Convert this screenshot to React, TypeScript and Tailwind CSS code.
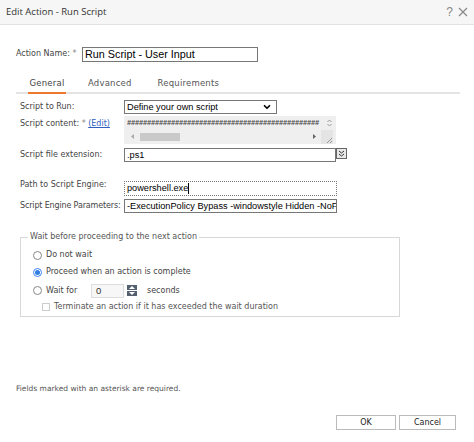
import { ChevronDown } from 'lucide-react';

const label = "text-[8px] text-[#444] font-['DejaVu_Sans',sans-serif] whitespace-nowrap";
const field = "h-[14px] border border-[#777] bg-white px-[2px] text-[9.2px] leading-[12px] text-black font-['Liberation_Sans',Arial,sans-serif] flex items-center overflow-hidden whitespace-nowrap";

function Radio({ checked }: { checked?: boolean }) {
  return (
    <span className={`w-[9px] h-[9px] rounded-full border ${checked ? 'border-[#3b82f6] bg-white' : 'border-[#888] bg-white'} flex items-center justify-center`}>
      {checked && <span className="w-[5px] h-[5px] rounded-full bg-[#2f7de1]" />}
    </span>
  );
}

export default function App() {
  return (
    <div className="w-[474px] h-[442px] bg-white flex flex-col font-['DejaVu_Sans',sans-serif] overflow-hidden">
      {/* Title bar */}
      <div className="h-[25px] bg-[#f6f6f6] border-b border-[#e2e2e2] flex items-center justify-between pl-[6px] pr-[6px]">
        <span className="text-[9.5px] text-[#333] font-['Open_Sans',sans-serif]">Edit Action - Run Script</span>
        <span className="flex items-center gap-[5px] text-[#888]">
          <span className="text-[12px] font-['Liberation_Sans',sans-serif]">?</span>
          <svg width="10" height="10" viewBox="0 0 10 10"><path d="M1 1L9 9M9 1L1 9" stroke="#888" strokeWidth="1.2" /></svg>
        </span>
      </div>

      <div className="flex flex-col pl-[16px] pr-[14px]">
        {/* Action name */}
        <div className="flex items-center mt-[21px] h-[16px]">
          <span className={`${label} w-[66px]`}>Action Name: <span className="text-[#888]">*</span></span>
          <div className={`${field} w-[176px] h-[15px] text-[10.8px]`}>Run Script - User Input</div>
        </div>

        {/* Tabs */}
        <div className="mt-[15px] flex border-b-2 border-[#e4e4e4] h-[17px] text-[8.5px] tracking-[0.2px]">
          <div className="ml-[12px] w-[38px] flex flex-col items-center justify-start">
            <span className="text-[#444]">General</span>
            <span className="mt-auto w-full h-[2px] bg-[#f0782d] mb-[-2px]" />
          </div>
          <span className="ml-[22px] text-[#555]">Advanced</span>
          <span className="ml-[26px] text-[#555]">Requirements</span>
        </div>

        {/* Form */}
        <div className="pl-[4px] flex flex-col">
          <div className="flex items-center mt-[6px] h-[14px]">
            <span className={`${label} w-[104px]`}>Script to Run:</span>
            <div className={`${field} w-[153px] h-[14px] justify-between`}>
              <span>Define your own script</span>
              <ChevronDown size={10} strokeWidth={4} className="mr-[2px]" />
            </div>
          </div>

          <div className="flex mt-[2px]">
            <span className={`${label} w-[104px] pt-[2px]`}>Script content: <span className="text-[#888]">*</span> <span className="text-[#2f5fbf] underline">(Edit)</span></span>
            <div className="w-[212px] h-[28px] bg-[#efefef] flex flex-col">
              <div className="flex items-center h-[13px] pl-[3px] pr-[4px]">
                <span className="text-[7px] leading-[8px] text-[#444] font-bold font-['Liberation_Mono',monospace] tracking-[-0.2px] overflow-hidden whitespace-nowrap flex-1">################################################</span>
                <svg width="5" height="8" viewBox="0 0 5 8" className="ml-[5px]"><path d="M0.5 3L2.5 1L4.5 3M0.5 5L2.5 7L4.5 5" stroke="#999" fill="none" /></svg>
              </div>
              <div className="flex items-center h-[15px] pl-[7px] pr-[3px]">
                <svg width="4" height="5" viewBox="0 0 4 5"><path d="M3 0L0 2.5L3 5Z" fill="#aaa" /></svg>
                <span className="ml-[5px] w-[40px] h-[8px] bg-[#c9c9c9]" />
                <span className="flex-1" />
                <svg width="4" height="5" viewBox="0 0 4 5"><path d="M1 0L4 2.5L1 5Z" fill="#666" /></svg>
                <span className="ml-[5px] w-[12px] h-[14px] bg-[#e4e4e4] flex items-end justify-end">
                  <svg width="8" height="8" viewBox="0 0 8 8"><path d="M7 2L2 7M7 5L5 7" stroke="#999" /></svg>
                </span>
              </div>
            </div>
          </div>

          <div className="flex items-center mt-[4px] h-[14px]">
            <span className={`${label} w-[104px]`}>Script file extension:</span>
            <div className={`${field} w-[212px] h-[14px]`}>.ps1</div>
            <span className="w-[11px] h-[11px] border border-[#666] bg-[#e8e8e8] flex items-center justify-center self-start">
              <svg width="7" height="7" viewBox="0 0 7 7"><path d="M1 1L3.5 3L6 1M1 4L3.5 6L6 4" stroke="#333" fill="none" /></svg>
            </span>
          </div>

          <div className="flex items-center mt-[17px] h-[14px]">
            <span className={`${label} w-[104px] self-start`}>Path to Script Engine:</span>
            <div className={`${field} w-[213px] h-[15px] mt-[4px] border-dotted border-[#444]`}>powershell.exe<span className="w-px h-[11px] bg-black" /></div>
          </div>

          <div className="flex items-center mt-[6px] h-[14px]">
            <span className={`${label} w-[104px] tracking-[-0.15px]`}>Script Engine Parameters:</span>
            <div className={`${field} w-[213px] h-[14px]`}>-ExecutionPolicy Bypass -windowstyle Hidden -NoF</div>
          </div>

          {/* Wait group */}
          <fieldset className="mt-[18px] w-[380px] h-[86px] border border-[#d8d8d8] px-[12px] pb-0 pt-0">
            <legend className="text-[8px] text-[#555] px-[2px] ml-[-5px]">Wait before proceeding to the next action</legend>
            <div className="flex flex-col text-[8px] text-[#444]">
              <div className="flex items-center gap-[4px] mt-[7px] h-[10px]"><Radio /><span>Do not wait</span></div>
              <div className="flex items-center gap-[4px] mt-[7px] h-[10px]"><Radio checked /><span>Proceed when an action is complete</span></div>
              <div className="flex items-center mt-[6px] h-[15px]">
                <Radio />
                <span className="ml-[4px] w-[45px]">Wait for</span>
                <div className="w-[33px] h-[14px] border border-[#ddd] bg-[#f7f7f7] text-[9.5px] text-[#333] pl-[4px] font-['Liberation_Sans',sans-serif] leading-[11px]">0</div>
                <div className="ml-[3px] flex flex-col gap-[1px]">
                  <span className="w-[10px] h-[5px] bg-[#55606e] flex items-center justify-center"><svg width="6" height="3" viewBox="0 0 6 3"><path d="M0 3L3 0L6 3Z" fill="#fff" /></svg></span>
                  <span className="w-[10px] h-[5px] bg-[#55606e] flex items-center justify-center"><svg width="6" height="3" viewBox="0 0 6 3"><path d="M0 0L3 3L6 0Z" fill="#fff" /></svg></span>
                </div>
                <span className="ml-[10px]">seconds</span>
              </div>
              <div className="flex items-center gap-[4px] mt-[3px] ml-[9px] h-[11px] text-[#555]">
                <span className="w-[8px] h-[8px] border border-[#ccc] bg-white" />
                <span>Terminate an action if it has exceeded the wait duration</span>
              </div>
            </div>
          </fieldset>
        </div>

        <div className="mt-[66px] text-[7.5px] text-[#555]">Fields marked with an asterisk are required.</div>

        <div className="mt-[21px] flex justify-end gap-[3px] pr-[4px]">
          <button className="w-[60px] h-[15px] border border-[#bbb] bg-white text-[8px] text-[#222] font-['DejaVu_Sans',sans-serif]">OK</button>
          <button className="w-[57px] h-[15px] border border-[#bbb] bg-white text-[8px] text-[#222] font-['DejaVu_Sans',sans-serif]">Cancel</button>
        </div>
      </div>
    </div>
  );
}
